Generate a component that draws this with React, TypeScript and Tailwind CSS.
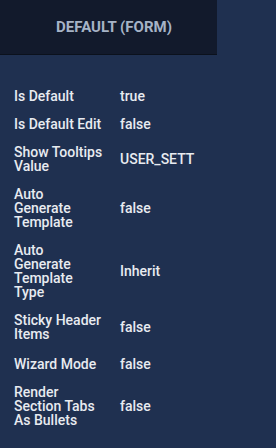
import * as React from 'react';

// Property rows for the form defaults panel
const rows: { label: string[]; value: string; extra?: boolean }[] = [
  { label: ['Is Default'], value: 'true' },
  { label: ['Is Default Edit'], value: 'false' },
  { label: ['Show Tooltips', 'Value'], value: 'USER_SETT' },
  { label: ['Auto', 'Generate', 'Template'], value: 'false' },
  { label: ['Auto', 'Generate', 'Template', 'Type'], value: 'Inherit' },
  { label: ['Sticky Header', 'Items'], value: 'false' },
  { label: ['Wizard Mode'], value: 'false', extra: true },
  { label: ['Render', 'Section Tabs', 'As Bullets'], value: 'false' },
];

export default function App() {
  return (
    <div
      className="w-[276px] h-[448px] bg-[#1f3050] overflow-hidden"
      style={{ fontFamily: 'Roboto, "Liberation Sans", sans-serif' }}
    >
      <div className="w-[217px] h-[55px] bg-[#121a2c] border-b border-[#0b111c] flex items-center justify-center pl-[11px]">
        <span className="text-[15px] font-bold text-[#a6b3c6]">
          DEFAULT (FORM)
        </span>
      </div>

      <div className="flex flex-col gap-[14px] pt-[34px] pl-[14px]">
        {rows.map((row, i) => (
          <div key={i} className={row.extra ? 'flex items-center mt-[2px]' : 'flex items-center'}>
            <div className="w-[106px] text-[14px] leading-[14px] font-medium text-[#e8ebf0]">
              {row.label.map((line, j) => (
                <div key={j}>{line}</div>
              ))}
            </div>
            <div className="text-[14px] leading-[14px] font-medium text-[#e8ebf0]">
              {row.value}
            </div>
          </div>
        ))}
      </div>
    </div>
  );
}
